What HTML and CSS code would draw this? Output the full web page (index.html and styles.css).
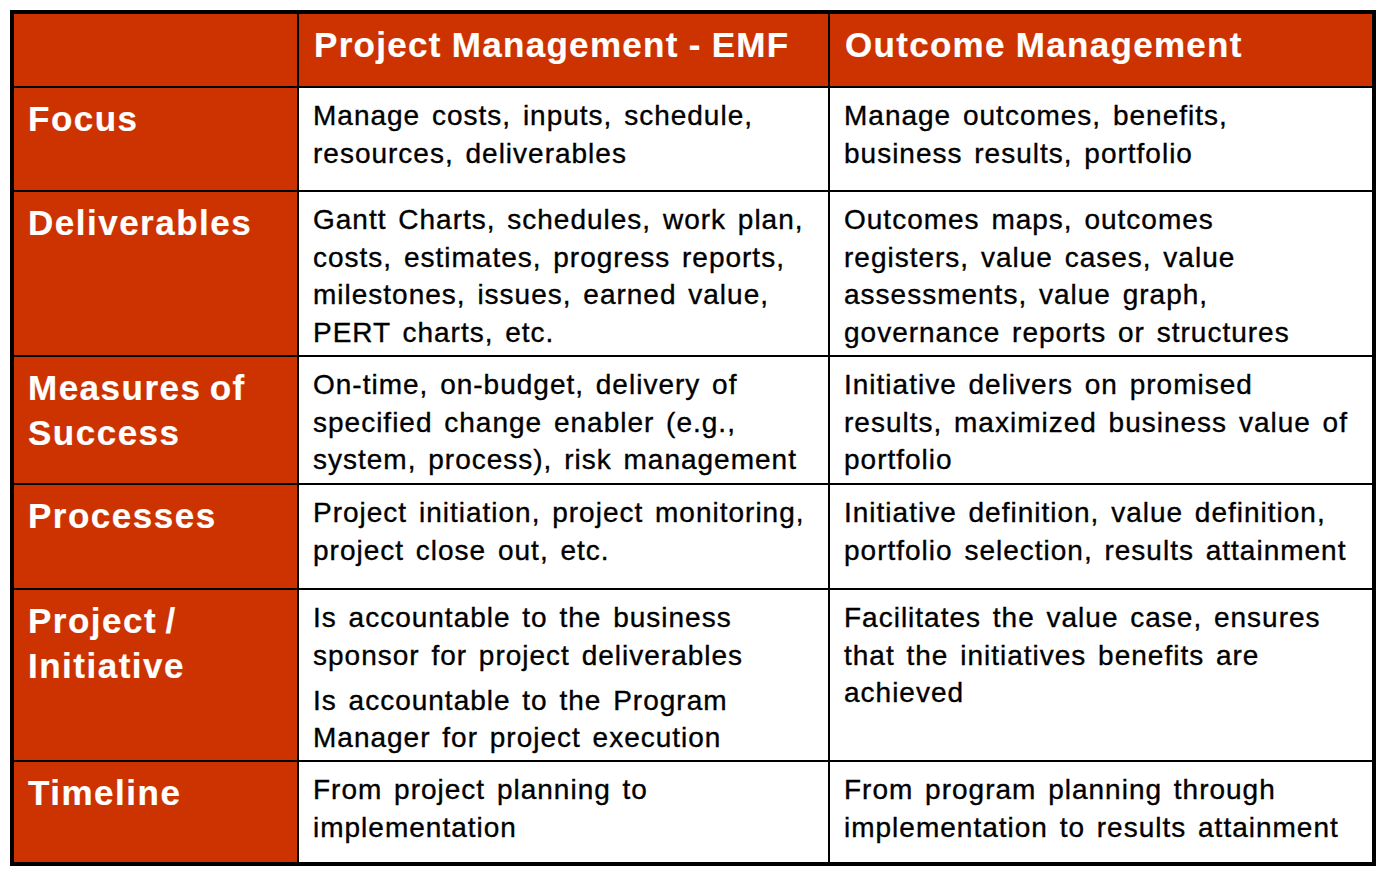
FILE: index.html
```html
<!DOCTYPE html>
<html>
<head>
<meta charset="utf-8">
<link rel="stylesheet" href="styles.css">
</head>
<body>
<div class="grid">
  <div class="cell label"></div>
  <div class="cell head">Project Management - EMF</div>
  <div class="cell head">Outcome Management</div>

  <div class="cell label">Focus</div>
  <div class="cell body">Manage costs, inputs, schedule,<br>resources, deliverables</div>
  <div class="cell body">Manage outcomes, benefits,<br>business results, portfolio</div>

  <div class="cell label">Deliverables</div>
  <div class="cell body">Gantt Charts, schedules, work plan,<br>costs, estimates, progress reports,<br>milestones, issues, earned value,<br>PERT charts, etc.</div>
  <div class="cell body">Outcomes maps, outcomes<br>registers, value cases, value<br>assessments, value graph,<br>governance reports or structures</div>

  <div class="cell label">Measures of<br>Success</div>
  <div class="cell body">On-time, on-budget, delivery of<br>specified change enabler (e.g.,<br>system, process), risk management</div>
  <div class="cell body">Initiative delivers on promised<br>results, maximized business value of<br>portfolio</div>

  <div class="cell label">Processes</div>
  <div class="cell body">Project initiation, project monitoring,<br>project close out, etc.</div>
  <div class="cell body">Initiative definition, value definition,<br>portfolio selection, results attainment</div>

  <div class="cell label">Project /<br>Initiative</div>
  <div class="cell body">
    <p class="para">Is accountable to the business<br>sponsor for project deliverables</p>
    <p class="para">Is accountable to the Program<br>Manager for project execution</p>
  </div>
  <div class="cell body">Facilitates the value case, ensures<br>that the initiatives benefits are<br>achieved</div>

  <div class="cell label">Timeline</div>
  <div class="cell body">From project planning to<br>implementation</div>
  <div class="cell body">From program planning through<br>implementation to results attainment</div>
</div>
</body>
</html>
```

FILE: styles.css
```css
html, body {
  margin: 0;
  padding: 0;
  background: #ffffff;
}

body {
  padding: 10px 0 0 10px;
}

.grid {
  display: grid;
  grid-template-columns: 283px 529px 542px;
  grid-template-rows: 72px 102px 163px 126px 103px 170px 100px;
  gap: 2px;
  width: 1358px;
  background: #000000;
  border: 4px solid #000000;
  font-family: "Liberation Sans", Arial, sans-serif;
}

.cell {
  box-sizing: border-box;
  padding-left: 14px;
}

.label, .head {
  background: #cc3300;
  color: #ffffff;
  font-weight: bold;
  font-size: 35px;
  line-height: 45px;
  padding-top: 8px;
  -webkit-text-stroke: 0.2px #ffffff;
}

.label {
  letter-spacing: 1.5px;
  word-spacing: -3px;
}

.head {
  padding-left: 15px;
  letter-spacing: 1.3px;
  word-spacing: -1px;
}

.body {
  background: #ffffff;
  color: #000000;
  font-size: 28px;
  line-height: 37.5px;
  letter-spacing: 1px;
  word-spacing: 3px;
  padding-top: 9px;
  -webkit-text-stroke: 0.35px #000000;
}

.para {
  margin: 0 0 7.5px 0;
}
```
